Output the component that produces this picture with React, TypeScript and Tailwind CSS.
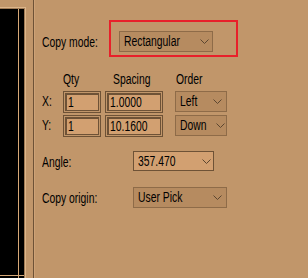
import React from 'react';

const Chevron = () => (
  <svg width="9" height="5" viewBox="0 0 9 5" className="shrink-0">
    <polyline points="0.5,0.5 4.5,4.5 8.5,0.5" fill="none" stroke="#5C4630" strokeWidth="1" />
  </svg>
);

// the dialog font is a narrow sans; squeeze Liberation Sans to match
const T: React.FC<{ children: React.ReactNode }> = ({ children }) => (
  <span className="inline-block whitespace-nowrap origin-left scale-x-[0.74]">{children}</span>
);

interface FieldProps {
  value: string;
  width: string;
}

// sunken edit box with double frame
const EditBox: React.FC<FieldProps> = ({ value, width }) => (
  <div className={`${width} h-[22px] border border-[#6E5236] p-px`}>
    <div className="h-full border-t-2 border-l-2 border-r border-b border-[#6E5236] bg-[#D2A071] pl-[1px] leading-[14px]">
      <T>{value}</T>
    </div>
  </div>
);

const DropDown: React.FC<FieldProps & { light?: boolean; height?: string; pr?: string }> = ({
  value,
  width,
  light,
  height = 'h-[21px]',
  pr = 'pr-[4px]',
}) => (
  <div
    className={`${width} ${height} ${pr} flex items-center justify-between pl-[4px] leading-[15px] border ${
      light ? 'bg-[#D2A071] border-[#6E5236]' : 'bg-[#B68B60] border-[#8E6B48]'
    }`}
  >
    <T>{value}</T>
    <Chevron />
  </div>
);

const App: React.FC = () => {
  return (
    <div
      className="flex w-[308px] h-[278px] overflow-hidden bg-[#C1966A] text-[14px] leading-[15px] text-black"
      style={{ fontFamily: '"Liberation Sans", Arial, sans-serif' }}
    >
      {/* Drawing area edge */}
      <div className="w-[26px] pt-[7px] flex flex-col">
        <div className="flex-1 flex flex-col border-t border-r border-[#DDB68B]">
          <div className="flex-1 border-t border-r border-[#A07A54] bg-black">
            <svg width="24" height="269" className="block">
              <line x1="18.5" y1="0" x2="18.5" y2="269" stroke="#D6A877" strokeWidth="1" />
              <line x1="0" y1="266.5" x2="24" y2="266.5" stroke="#D6A877" strokeWidth="1" />
            </svg>
          </div>
        </div>
      </div>

      {/* Splitter */}
      <div className="ml-[7px] w-px bg-[#6E5236]" />
      <div className="w-px bg-[#CDA277]" />

      {/* Properties */}
      <div className="flex-1 pl-[7px] pt-[20px]">
        <div className="flex items-start">
          <div className="w-[67px] pt-[15px]">
            <T>Copy mode:</T>
          </div>
          <div className="w-[129px] h-[37px] border-2 border-[#E8202A] pl-[8px] pt-[9px]">
            <DropDown value="Rectangular" width="w-[94px]" />
          </div>
        </div>

        <div className="flex mt-[15px]">
          <div className="w-[21px]" />
          <div className="w-[38px]">
            <T>Qty</T>
          </div>
          <div className="w-[4px]" />
          <div className="w-[58px] pl-[8px]">
            <T>Spacing</T>
          </div>
          <div className="w-[12px]" />
          <div className="w-[52px] pl-[1px]">
            <T>Order</T>
          </div>
        </div>

        <div className="flex flex-col gap-[2px] mt-[4px]">
          {[
            { axis: 'X:', qty: '1', spacing: '1.0000', order: 'Left' },
            { axis: 'Y:', qty: '1', spacing: '10.1600', order: 'Down' },
          ].map((row) => (
            <div key={row.axis} className="flex items-start">
              <div className="w-[21px] pt-[3px]">
                <T>{row.axis}</T>
              </div>
              <EditBox value={row.qty} width="w-[38px]" />
              <div className="w-[4px]" />
              <EditBox value={row.spacing} width="w-[58px]" />
              <div className="w-[12px]" />
              <DropDown value={row.order} width="w-[52px]" />
            </div>
          ))}
        </div>

        <div className="flex items-start mt-[14px]">
          <div className="w-[91px] pt-[4px]">
            <T>Angle:</T>
          </div>
          <DropDown value="357.470" width="w-[81px]" height="h-[20px]" pr="pr-[2px]" light />
        </div>

        <div className="flex items-start mt-[16px]">
          <div className="w-[91px] pt-[4px]">
            <T>Copy origin:</T>
          </div>
          <DropDown value="User Pick" width="w-[94px]" />
        </div>
      </div>
    </div>
  );
};

export default App;
